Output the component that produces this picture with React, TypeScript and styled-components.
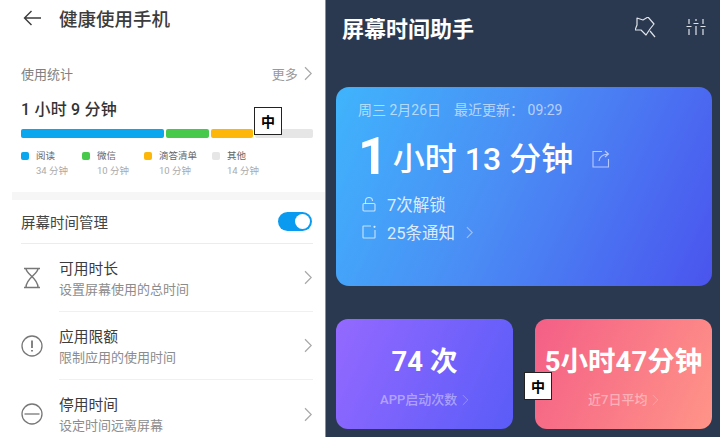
import styled, { createGlobalStyle } from 'styled-components';

const GlobalStyle = createGlobalStyle`
  html, body {
    margin: 0;
    padding: 0;
    background: #fff;
  }
  * {
    box-sizing: border-box;
  }
`;

const Page = styled.div`
  position: relative;
  display: flex;
  width: 720px;
  height: 437px;
  overflow: hidden;
  font-family: Roboto, "Noto Sans CJK SC", sans-serif;
`;

const Settings = styled.section`
  width: 325px;
  flex: none;
  background: #fff;
  color: #333;
`;

const Padded = styled.div`
  padding: 0 12px 0 21px;
`;

const Header = styled.header`
  display: flex;
  align-items: center;
  height: 36px;
  padding: 0 0 1px 23px;
  gap: 18px;
  font-size: 18.5px;
  font-weight: 500;
  color: #3c3c3c;
`;

const StatsHead = styled.div`
  display: flex;
  align-items: center;
  justify-content: space-between;
  height: 24px;
  margin-top: 25px;
  font-size: 13px;
  color: #808080;
`;

const More = styled.span`
  display: flex;
  align-items: center;
  gap: 6px;
  padding-right: 1px;
  color: #999;
`;

const Total = styled.div`
  height: 24px;
  line-height: 24px;
  margin-top: 13px;
  font-size: 16px;
  font-weight: 500;
  letter-spacing: 0.2px;
  color: #333;
`;

const Bar = styled.div`
  display: flex;
  gap: 2px;
  height: 9px;
  margin-top: 7px;
`;

const Segment = styled.div<{ $color: string; $width: number }>`
  width: ${(p) => p.$width}px;
  flex: ${(p) => (p.$color === '#e6e6e6' ? '1' : 'none')};
  background: ${(p) => p.$color};
  border-radius: 2px;
`;

const Legend = styled.div`
  display: flex;
  margin-top: 12px;
`;

const LegendItem = styled.div<{ $width: number }>`
  display: grid;
  grid-template-columns: 8px auto;
  column-gap: 7px;
  row-gap: 3px;
  align-items: center;
  align-content: start;
  width: ${(p) => p.$width}px;
`;

const Dot = styled.i<{ $color: string }>`
  display: block;
  width: 8px;
  height: 8px;
  border-radius: 2px;
  background: ${(p) => p.$color};
`;

const LegendName = styled.span`
  font-size: 9.5px;
  line-height: 12px;
  color: #666;
`;

const LegendTime = styled.span`
  grid-column: 2;
  font-size: 9.5px;
  line-height: 12px;
  color: #aaa;
`;

const Band = styled.div`
  height: 8px;
  margin: 15px 0 0 12px;
  background: #f6f6f6;
`;

const ManageHead = styled.div`
  display: flex;
  align-items: center;
  justify-content: space-between;
  height: 44px;
  padding-right: 1px;
  border-bottom: 1px solid #ececec;
  font-size: 14.5px;
  color: #444;
`;

const Toggle = styled.div`
  display: flex;
  align-items: center;
  justify-content: flex-end;
  width: 34px;
  height: 19px;
  padding-right: 2px;
  border-radius: 10px;
  background: #0a9bf0;
`;

const Knob = styled.i`
  display: block;
  width: 15px;
  height: 15px;
  border-radius: 50%;
  background: #fff;
`;

const Row = styled.div`
  display: flex;
  height: 68px;
`;

const RowIcon = styled.div`
  display: flex;
  align-items: center;
  width: 38px;
  flex: none;
  color: #777;
`;

const RowBody = styled.div<{ $last?: boolean }>`
  display: flex;
  align-items: center;
  justify-content: space-between;
  flex: 1;
  padding-right: 1px;
  border-bottom: ${(p) => (p.$last ? 'none' : '1px solid #f0f0f0')};
`;

const RowText = styled.div`
  padding-top: 3px;
`;

const RowTitle = styled.div`
  font-size: 14.75px;
  line-height: 20px;
  color: #3c3c3c;
`;

const RowSub = styled.div`
  font-size: 13px;
  line-height: 21px;
  color: #8c8c8c;
`;

const Assistant = styled.section`
  flex: 1;
  padding: 0 8px 0 10px;
  background: #2a3950;
  border-left: 1px solid #8a8f98;
  color: #fff;
`;

const TopBar = styled.header`
  display: flex;
  align-items: center;
  justify-content: space-between;
  height: 54px;
  padding: 0 6px;
`;

const AppTitle = styled.h1`
  margin: 0;
  font-size: 22px;
  font-weight: 700;
  color: #fff;
`;

const TopIcons = styled.div`
  display: flex;
  align-items: center;
  gap: 30px;
`;

const MainCard = styled.div`
  height: 199px;
  margin-top: 33px;
  padding: 13px 22px;
  border-radius: 13px;
  background: linear-gradient(115deg, #40b4fc 0%, #4a8df5 45%, #4a54ee 100%);
`;

const DateLine = styled.div`
  display: flex;
  gap: 13px;
  font-size: 14px;
  line-height: 20px;
  color: rgba(255, 255, 255, 0.6);
`;

const Duration = styled.div`
  display: flex;
  align-items: center;
  height: 54px;
  margin-top: 9px;
  font-size: 32px;
  font-weight: 500;
`;

const BigDigit = styled.span`
  margin-right: 5px;
  font-size: 52px;
  font-weight: 700;
`;

const EditButton = styled.span`
  display: flex;
  margin-left: 19px;
  margin-top: 6px;
`;

const InfoLine = styled.div`
  display: flex;
  align-items: center;
  gap: 11px;
  height: 28px;
  padding-left: 4px;
  font-size: 16.5px;
  color: rgba(255, 255, 255, 0.82);
`;

const InfoList = styled.div`
  margin-top: 7px;
`;

const SmallCards = styled.div`
  display: flex;
  gap: 22px;
  margin-top: 33px;
`;

const SmallCard = styled.div<{ $from: string; $to: string }>`
  display: flex;
  flex-direction: column;
  align-items: center;
  flex: 1;
  height: 110px;
  padding-top: 24px;
  border-radius: 12px;
  background: linear-gradient(115deg, ${(p) => p.$from}, ${(p) => p.$to});
`;

const SmallValue = styled.div`
  font-size: 27.5px;
  line-height: 38px;
  font-weight: 700;
  white-space: nowrap;
`;

const SmallLabel = styled.div`
  display: flex;
  align-items: center;
  gap: 5px;
  margin-top: 10px;
  font-size: 13px;
  font-weight: 500;
  line-height: 18px;
  color: rgba(255, 255, 255, 0.42);
`;

const ImeBadge = styled.div<{ $left: number; $top: number }>`
  position: absolute;
  left: ${(p) => p.$left}px;
  top: ${(p) => p.$top}px;
  display: flex;
  align-items: center;
  justify-content: center;
  width: 28px;
  height: 28px;
  border: 1px solid #222;
  background: #fff;
  color: #000;
  font-size: 14px;
  font-weight: 700;
`;

const Chevron = ({ size = 15, color = '#a8a8a8' }: { size?: number; color?: string }) => (
  <svg width={size * 0.55} height={size} viewBox="0 0 8 14" fill="none" stroke={color} strokeWidth="1.2">
    <path d="M1 1l6 6-6 6" />
  </svg>
);

const segments = [
  { color: '#0aa6ee', width: 143 },
  { color: '#47c94c', width: 43 },
  { color: '#fdb70a', width: 42 },
  { color: '#e6e6e6', width: 59 },
];

const legend = [
  { name: '阅读', time: '34 分钟', color: '#0aa6ee', width: 61 },
  { name: '微信', time: '10 分钟', color: '#47c94c', width: 62 },
  { name: '滴答清单', time: '10 分钟', color: '#fdb70a', width: 68 },
  { name: '其他', time: '14 分钟', color: '#e6e6e6', width: 70 },
];

const HourglassIcon = () => (
  <svg width="22" height="24" viewBox="0 0 22 24" fill="none" stroke="currentColor" strokeWidth="1.5">
    <path d="M3 2.500h16M3 21.500h16M5 2.500c0 6 12 9 12 19M17 2.500c0 6-12 9-12 19" />
  </svg>
);

const AlertIcon = () => (
  <svg width="22" height="22" viewBox="0 0 22 22" fill="none" stroke="currentColor" strokeWidth="1.3">
    <circle cx="11" cy="11" r="10" />
    <path d="M11 5.500v7.500" strokeWidth="1.8" />
    <path d="M11 15v1.600" strokeWidth="1.8" />
  </svg>
);

const MinusCircleIcon = () => (
  <svg width="22" height="22" viewBox="0 0 22 22" fill="none" stroke="currentColor" strokeWidth="1.3">
    <circle cx="11" cy="11" r="10" />
    <path d="M3.500 11h15" />
  </svg>
);

const rows = [
  { title: '可用时长', sub: '设置屏幕使用的总时间', icon: <HourglassIcon /> },
  { title: '应用限额', sub: '限制应用的使用时间', icon: <AlertIcon /> },
  { title: '停用时间', sub: '设定时间远离屏幕', icon: <MinusCircleIcon /> },
];

const StarIcon = () => (
  <svg width="21" height="21" viewBox="0 0 21 21" fill="none" stroke="#dfe3ea" strokeWidth="1.2" strokeLinejoin="round">
    <path d="M2 1l6 2 5-3 6 7-4 5-4 6-5-5H0l2-5z" />
    <path d="M15 14l5 6" />
  </svg>
);

const SlidersIcon = () => (
  <svg width="20" height="18" viewBox="0 0 20 18" fill="none" stroke="#dfe3ea" strokeWidth="1.2">
    <path d="M3 1v5M3 11v6M10 1v2M10 8v9M17 1v5M17 11v6" />
    <path d="M0.500 8.500h5M7.500 5.500h5M14.500 8.500h5" />
  </svg>
);

const EditIcon = () => (
  <svg width="18" height="18" viewBox="0 0 18 18" fill="none" stroke="rgba(255,255,255,0.6)" strokeWidth="1.1">
    <path d="M10 1.500H1v15.500h15.500V9" />
    <path d="M7 11c.500-4 3-6.500 9-7M13 1l3.500 3L13 7" />
  </svg>
);

const LockIcon = () => (
  <svg width="14" height="15" viewBox="0 0 14 15" fill="none" stroke="rgba(255,255,255,0.7)" strokeWidth="1.1">
    <rect x="1" y="6.500" width="12" height="7.500" rx="1" />
    <path d="M3.500 6.500V4a3.500 3.500 0 0 1 7 0" />
  </svg>
);

const NoticeIcon = () => (
  <svg width="14" height="14" viewBox="0 0 14 14" fill="none" stroke="rgba(255,255,255,0.7)" strokeWidth="1.1">
    <path d="M9 1H1.500a.5.5 0 0 0-.5.500v11a.5.5 0 0 0 .5.500h11a.5.5 0 0 0 .5-.500V5" />
    <circle cx="12.500" cy="1.800" r="1.100" fill="rgba(255,255,255,0.8)" stroke="none" />
  </svg>
);

export default function App() {
  return (
    <Page>
      <GlobalStyle />
      <Settings>
        <Header>
          <svg width="18" height="16" viewBox="0 0 18 16" fill="none" stroke="#3c3c3c" strokeWidth="1.400">
            <path d="M8.500 1L1.500 8l7 7M1.500 8H18" />
          </svg>
          健康使用手机
        </Header>
        <Padded>
          <StatsHead>
            <span>使用统计</span>
            <More>
              更多 <Chevron />
            </More>
          </StatsHead>
          <Total>1 小时 9 分钟</Total>
          <Bar>
            {segments.map((s) => (
              <Segment key={s.color} $color={s.color} $width={s.width} />
            ))}
          </Bar>
          <Legend>
            {legend.map((l) => (
              <LegendItem key={l.name} $width={l.width}>
                <Dot $color={l.color} />
                <LegendName>{l.name}</LegendName>
                <LegendTime>{l.time}</LegendTime>
              </LegendItem>
            ))}
          </Legend>
        </Padded>
        <Band />
        <Padded>
          <ManageHead>
            屏幕时间管理
            <Toggle>
              <Knob />
            </Toggle>
          </ManageHead>
          {rows.map((r, i) => (
            <Row key={r.title}>
              <RowIcon>{r.icon}</RowIcon>
              <RowBody $last={i === rows.length - 1}>
                <RowText>
                  <RowTitle>{r.title}</RowTitle>
                  <RowSub>{r.sub}</RowSub>
                </RowText>
                <Chevron />
              </RowBody>
            </Row>
          ))}
        </Padded>
      </Settings>
      <Assistant>
        <TopBar>
          <AppTitle>屏幕时间助手</AppTitle>
          <TopIcons>
            <StarIcon />
            <SlidersIcon />
          </TopIcons>
        </TopBar>
        <MainCard>
          <DateLine>
            <span>周三 2月26日</span>
            <span>最近更新： 09:29</span>
          </DateLine>
          <Duration>
            <BigDigit>1</BigDigit>
            小时 13 分钟
            <EditButton>
              <EditIcon />
            </EditButton>
          </Duration>
          <InfoList>
            <InfoLine>
              <LockIcon />
              7次解锁
            </InfoLine>
            <InfoLine>
              <NoticeIcon />
              25条通知
              <Chevron size={13} color="rgba(255,255,255,0.45)" />
            </InfoLine>
          </InfoList>
        </MainCard>
        <SmallCards>
          <SmallCard $from="#9469ff" $to="#5a5cf8">
            <SmallValue>74 次</SmallValue>
            <SmallLabel>
              APP启动次数
              <Chevron size={12} color="rgba(255,255,255,0.3)" />
            </SmallLabel>
          </SmallCard>
          <SmallCard $from="#f45f86" $to="#ff9488">
            <SmallValue>5小时47分钟</SmallValue>
            <SmallLabel>
              近7日平均
              <Chevron size={12} color="rgba(255,255,255,0.25)" />
            </SmallLabel>
          </SmallCard>
        </SmallCards>
      </Assistant>
      <ImeBadge $left={254} $top={107}>中</ImeBadge>
      <ImeBadge $left={524} $top={372}>中</ImeBadge>
    </Page>
  );
}
